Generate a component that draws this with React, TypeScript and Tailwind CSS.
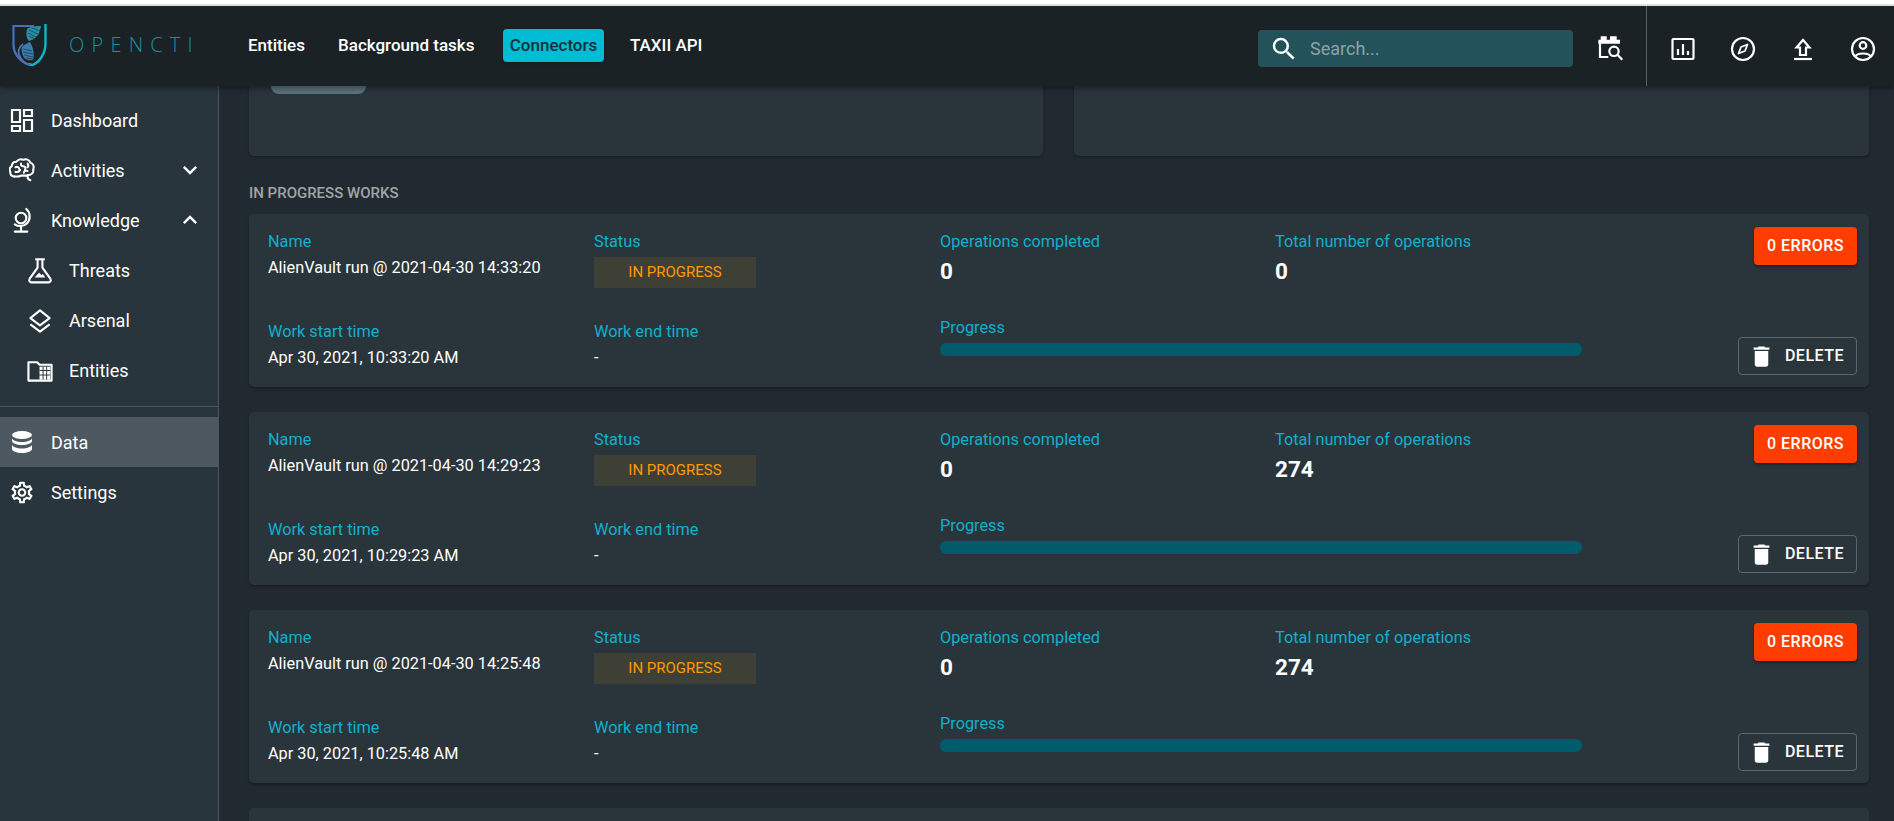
import {
  MdExpandMore,
  MdExpandLess,
  MdOutlineSettings,
  MdSearch,
  MdDelete,
} from "react-icons/md";

const WORKS = [
  { name: "AlienVault run @ 2021-04-30 14:33:20", start: "Apr 30, 2021, 10:33:20 AM", total: "0" },
  { name: "AlienVault run @ 2021-04-30 14:29:23", start: "Apr 30, 2021, 10:29:23 AM", total: "274" },
  { name: "AlienVault run @ 2021-04-30 14:25:48", start: "Apr 30, 2021, 10:25:48 AM", total: "274" },
];

function Logo() {
  return (
    <svg width="38" height="46" viewBox="0 0 38 46" fill="none">
      <path d="M23 3H2.500v19c0 9 6 15 13 19" stroke="#4c70b6" strokeWidth="2.200" />
      <path d="M34.500 1v19c0 11-6 19-13 22l-5-1" stroke="#16b3c7" strokeWidth="2.400" />
      <path d="M16 6c2-2 8-3 14-3-1 6-3 10-7 13l-5 2c-3-3-3-8-2-12z" fill="#2a8fa6" />
      <path d="M18 7l9 4M17 10l8 4M18 13l6 3M21 5l8 3" stroke="#16404a" strokeWidth="0.800" />
      <path d="M11 24c3-3 6-4 8-5 3 5 5 12 3 18-4 1-8 0-10-4-1-3-2-6-1-9z" fill="#3a7cab" />
      <path d="M12 26l9 2M12 29l10 2M13 32l9 2M15 35l7 1" stroke="#16404a" strokeWidth="0.800" />
      <path d="M12 21c-4 3-6 8-3 13 2 4 6 7 10 8" stroke="#4c70b6" strokeWidth="2" />
    </svg>
  );
}

function DashboardIcon() {
  return (
    <svg width="26" height="26" viewBox="0 0 26 26" fill="none" stroke="currentColor" strokeWidth="2.200">
      <path d="M3 3h8v12H3zM15 3h8v6h-8zM15 13h8v11h-8zM3 19h8v5H3z" />
    </svg>
  );
}

function BrainIcon() {
  return (
    <svg width="28" height="27" viewBox="0 0 28 27" fill="none" stroke="currentColor" strokeWidth="2.200" strokeLinejoin="round" strokeLinecap="round">
      <path d="M6 20c-3 0-5-2-4.500-5C0 13 .500 10 3 9c0-3 2-5 5-5 2-2.500 5-3 7.500-2 3-1.500 6.500 0 7.500 3 3 1 4.500 4.500 3 7.500 1 3-2 6-5 6h-1v2c0 2 1.500 3 3 3.500" />
      <path d="M6 20h4c1.500 0 2-1 3-1h6" />
      <path d="M7 10c2-1 4 0 4 2M7 15c2 .5 4 0 5-2M13 6c-.500 2 .500 3 2.500 3s3 2 1.500 4M16 16c0-1.500 2-2.500 4-2M20 6c1 1.500 1 3 0 4" />
    </svg>
  );
}

function GlobeIcon() {
  return (
    <svg width="27" height="27" viewBox="0 0 27 27" fill="none" stroke="currentColor" strokeWidth="2.200" strokeLinecap="round">
      <circle cx="12.500" cy="11" r="5.500" />
      <path d="M18 1.500c4.500 4 4.500 11 .500 15-3.500 3.500-9 3.500-12.500 1" />
      <path d="M12.500 20v5M6 25h13" />
    </svg>
  );
}

function FlaskIcon() {
  return (
    <svg width="27" height="27" viewBox="0 0 27 27" fill="none" stroke="currentColor" strokeWidth="2.200" strokeLinejoin="round">
      <path d="M8.500 1.800h10M11 2v8.500L2.800 22c-1.200 2 0 3.800 2 3.800h17.400c2 0 3.200-1.800 2-3.800L16 10.500V2" />
      <path d="M8.500 20.500l4-4.500 2.500 2.500 1.500-1 2 3z" fill="currentColor" strokeWidth="0.500" />
    </svg>
  );
}

function LayersIcon() {
  return (
    <svg width="27" height="27" viewBox="0 0 27 27" fill="none" stroke="currentColor" strokeWidth="2.200" strokeLinejoin="round">
      <path d="M13.500 3L23.500 11l-10 7.500L3.500 11z" />
      <path d="M3.500 17.500l10 7.500 10-7.500" />
    </svg>
  );
}

function FolderTableIcon() {
  return (
    <svg width="27" height="27" viewBox="0 0 27 27" fill="none">
      <path d="M1.500 5h9l2.500 2.500h12.500V24H1.500z" stroke="currentColor" strokeWidth="2.200" strokeLinejoin="round" />
      <path d="M13 9.500h11V23H13z" fill="currentColor" />
      <path d="M13 13.500h11M13 18.200h11M16.700 9.500V23M20.400 9.500V23" stroke="#29353c" strokeWidth="1" />
    </svg>
  );
}

function DatabaseIcon() {
  return (
    <svg width="24" height="24" viewBox="0 0 24 24" fill="currentColor">
      <ellipse cx="12" cy="5" rx="10" ry="4" />
      <path d="M2 8v3c0 2.200 4.500 4 10 4s10-1.800 10-4V8c0 2.200-4.500 4-10 4S2 10.200 2 8z" />
      <path d="M2 14.500V19c0 2.200 4.500 4 10 4s10-1.800 10-4v-4.500c0 2.200-4.500 4-10 4s-10-1.800-10-4z" />
    </svg>
  );
}

function CalendarSearchIcon() {
  return (
    <svg width="27" height="27" viewBox="0 0 27 27" fill="none" stroke="currentColor" strokeWidth="2.200">
      <path d="M3.700 1.300h6v3.400h3.300V1.300h6.700v3.400H23v4H1.300v-4h2.400z" fill="currentColor" stroke="none" />
      <path d="M3 8v14h8.300" />
      <circle cx="17" cy="16.300" r="4.700" />
      <path d="M20.500 19.800l4.800 4.900" />
    </svg>
  );
}

function AssessmentIcon() {
  return (
    <svg width="30" height="30" viewBox="0 0 30 30" fill="none" stroke="currentColor" strokeWidth="2.200">
      <rect x="4.500" y="5" width="21" height="20" rx="1" />
      <path d="M10 15v6M15 10v11M20 17v4" />
    </svg>
  );
}

function CompassIcon() {
  return (
    <svg width="30" height="30" viewBox="0 0 30 30" fill="none" stroke="currentColor" strokeWidth="2.200" strokeLinejoin="round">
      <circle cx="15" cy="15" r="11" />
      <path d="M19.500 10.500L17 17l-6.500 2.500L13 13z" strokeWidth="1.800" />
    </svg>
  );
}

function UploadIcon() {
  return (
    <svg width="30" height="30" viewBox="0 0 30 30" fill="none" stroke="currentColor" strokeWidth="2.200">
      <path d="M15 6l6.500 7.500h-3.500V21h-6v-7.500H8.500z" />
      <path d="M6 25h18" />
    </svg>
  );
}

function AccountIcon() {
  return (
    <svg width="30" height="30" viewBox="0 0 30 30" fill="none" stroke="currentColor" strokeWidth="2.200">
      <circle cx="15" cy="15" r="11" />
      <circle cx="15" cy="11.500" r="3.300" />
      <path d="M7.500 22.500c1.500-4 13.500-4 15 0" />
    </svg>
  );
}

function SideItem({ icon, label, chevron, sub, active }: { icon: React.ReactNode; label: string; chevron?: "up" | "down"; sub?: boolean; active?: boolean }) {
  return (
    <div className={`flex h-[50px] items-center text-[18px] text-white ${active ? "bg-[#4e5860]" : ""} ${sub ? "pl-[27px]" : "pl-[9px]"}`}>
      <span className="mr-[16px] flex w-[26px] justify-center">{icon}</span>
      <span className="flex-1">{label}</span>
      {chevron === "down" && <MdExpandMore size={28} className="mr-[14px]" />}
      {chevron === "up" && <MdExpandLess size={28} className="mr-[14px]" />}
    </div>
  );
}

function Label({ children }: { children: React.ReactNode }) {
  return <div className="text-[16.300px] leading-[20px] text-[#0fb0cf]">{children}</div>;
}

function WorkCard({ name, start, total }: { name: string; start: string; total: string }) {
  return (
    <div className="flex h-[173px] shrink-0 rounded-[5px] bg-[#2a353b] pl-[19px] pr-[12px] pt-[13px] pb-[12px] shadow-[0_2px_3px_rgba(0,0,0,0.3)]">
      <div className="grid flex-1 grid-cols-[326px_346px_335px_1fr] grid-rows-[90px_1fr] pt-[5px]">
        <div>
          <Label>Name</Label>
          <div className="mt-[6px] text-[16.300px] leading-[20px] text-white">{name}</div>
        </div>
        <div>
          <Label>Status</Label>
          <div className="mt-[5px] flex h-[31px] w-[162px] items-center justify-center bg-[#3e4036] text-[15px] text-[#ff9800]">IN PROGRESS</div>
        </div>
        <div>
          <Label>Operations completed</Label>
          <div className="mt-[6px] text-[22.500px] font-bold leading-[27px] text-white">0</div>
        </div>
        <div>
          <Label>Total number of operations</Label>
          <div className="mt-[6px] text-[22.500px] font-bold leading-[27px] text-white">{total}</div>
        </div>
        <div>
          <Label>Work start time</Label>
          <div className="mt-[6px] text-[16.300px] leading-[20px] text-white">{start}</div>
        </div>
        <div>
          <Label>Work end time</Label>
          <div className="mt-[6px] text-[16.300px] leading-[20px] text-white">-</div>
        </div>
        <div className="col-span-2 -mt-[4px]">
          <Label>Progress</Label>
          <div className="mt-[5px] h-[13px] w-[642px] rounded-[6px] bg-[#005b6a]" />
        </div>
      </div>
      <div className="flex flex-col items-end justify-between">
        <div className="flex h-[38px] w-[103px] items-center justify-center rounded-[4px] bg-[#ff3d00] text-[16px] font-medium tracking-[0.500px] text-white shadow-[0_2px_3px_rgba(0,0,0,0.35)]">
          0 ERRORS
        </div>
        <div className="flex h-[38px] w-[119px] items-center justify-end gap-[10px] rounded-[4px] border border-[#5c666c] pr-[12px] text-[16px] font-medium tracking-[0.500px] text-white">
          <MdDelete size={27} />
          DELETE
        </div>
      </div>
    </div>
  );
}

export default function App() {
  return (
    <div className="flex h-[821px] w-[1894px] flex-col overflow-hidden bg-[#222a31] font-[Roboto,sans-serif]">
      <div className="h-[6px] shrink-0 border-b-2 border-[#e4e4e4] bg-white" />

      <header className="relative z-10 flex h-[80px] shrink-0 items-center bg-[#1b2226] shadow-[0_3px_5px_rgba(0,0,0,0.35)]">
        <div className="ml-[11px] flex w-[237px] items-center">
          <Logo />
          <span className="ml-[20px] -mt-[2px] font-['Open_Sans',sans-serif] text-[20px] font-light tracking-[7.200px] text-[#1a8fa0]">OPENCTI</span>
        </div>
        <nav className="-mt-[1px] flex items-center text-[17px] font-medium text-white">
          <span className="w-[57px]">Entities</span>
          <span className="ml-[33px] w-[138px] whitespace-nowrap">Background tasks</span>
          <span className="ml-[27px] flex h-[33px] w-[101px] items-center justify-center rounded-[4px] bg-[#00bcd4] text-[#123138] shadow-[0_1px_3px_rgba(0,0,0,0.4)]">Connectors</span>
          <span className="ml-[26px]">TAXII API</span>
        </nav>
        <div className="ml-auto flex h-full items-center">
          <div className="mt-[5px] flex h-[37px] w-[315px] items-center rounded-[4px] bg-[#24525b] text-[18px] text-[#8aa3a8]">
            <MdSearch size={30} className="ml-[11px] text-white" />
            <span className="ml-[11px]">Search...</span>
          </div>
          <span className="mt-[5px] ml-[24px] flex w-[27px] justify-center text-white"><CalendarSearchIcon /></span>
          <div className="ml-[22px] h-full w-px bg-[#5b6368]" />
          <div className="mt-[5px] flex items-center gap-[30px] pl-[21px] pr-[16px] text-white">
            <AssessmentIcon />
            <CompassIcon />
            <UploadIcon />
            <AccountIcon />
          </div>
        </div>
      </header>

      <div className="flex min-h-0 flex-1">
        <aside className="w-[219px] shrink-0 border-r border-[#4a545a] bg-[#29353c] pt-[9px]">
          <SideItem icon={<DashboardIcon />} label="Dashboard" />
          <SideItem icon={<BrainIcon />} label="Activities" chevron="down" />
          <SideItem icon={<GlobeIcon />} label="Knowledge" chevron="up" />
          <SideItem sub icon={<FlaskIcon />} label="Threats" />
          <SideItem sub icon={<LayersIcon />} label="Arsenal" />
          <SideItem sub icon={<FolderTableIcon />} label="Entities" />
          <div className="mt-[11px] mb-[10px] h-px bg-[#4a545a]" />
          <SideItem active icon={<DatabaseIcon />} label="Data" />
          <SideItem icon={<MdOutlineSettings size={29} />} label="Settings" />
        </aside>

        <main className="flex min-w-0 flex-1 flex-col pl-[30px] pr-[25px]">
          <div className="flex shrink-0 gap-[31px]">
            <div className="h-[70px] w-[794px] rounded-b-[5px] bg-[#2a353b] shadow-[0_2px_3px_rgba(0,0,0,0.25)]">
              <div className="ml-[22px] h-[8px] w-[95px] rounded-b-[12px] bg-[#5c727c]" />
            </div>
            <div className="h-[70px] flex-1 rounded-b-[5px] bg-[#2a353b] shadow-[0_2px_3px_rgba(0,0,0,0.25)]" />
          </div>
          <div className="mt-[29px] mb-[13px] text-[15px] font-medium leading-[16px] text-[#a0a5a8]">IN PROGRESS WORKS</div>
          <div className="flex flex-col gap-[25px]">
            {WORKS.map((w) => (
              <WorkCard key={w.name} name={w.name} start={w.start} total={w.total} />
            ))}
            <div className="h-[60px] shrink-0 rounded-[5px] bg-[#2a353b]" />
          </div>
        </main>
      </div>
    </div>
  );
}
